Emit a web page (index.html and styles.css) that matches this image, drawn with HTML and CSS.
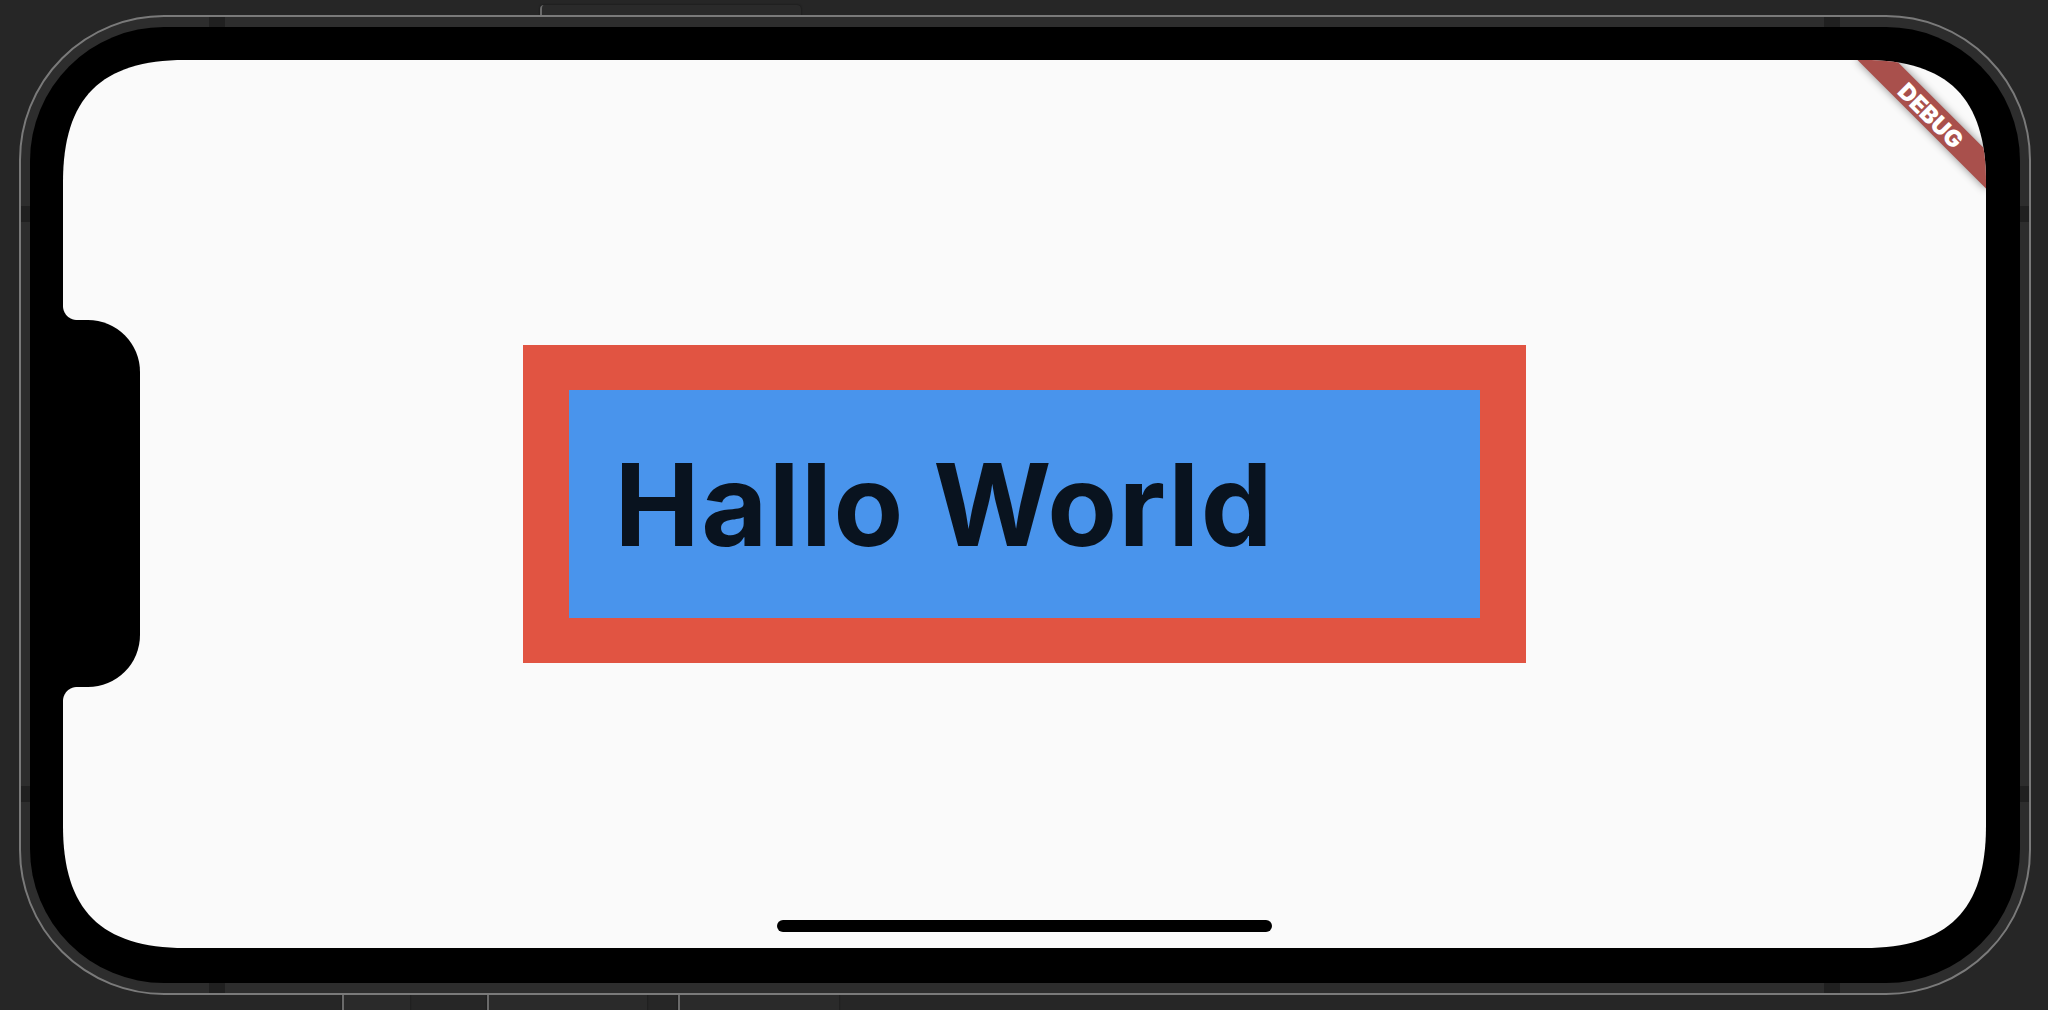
FILE: index.html
```html
<!DOCTYPE html>
<html lang="de">
<head>
<meta charset="utf-8">
<title>Hallo World</title>
<link rel="stylesheet" href="styles.css">
</head>
<body>
<div class="stage">
  <div class="side-btn btn-top"></div>
  <div class="side-btn btn-b1"></div>
  <div class="side-btn btn-b2"></div>
  <div class="side-btn btn-b3"></div>
  <div class="device">
    <span class="ant ant-t1"></span>
    <span class="ant ant-t2"></span>
    <span class="ant ant-b1"></span>
    <span class="ant ant-b2"></span>
    <span class="ant ant-l1"></span>
    <span class="ant ant-l2"></span>
    <span class="ant ant-r1"></span>
    <span class="ant ant-r2"></span>
    <div class="bezel">
      <div class="screen">
        <div class="outer-box">
          <div class="inner-box">
            <span class="label">Hallo World</span>
          </div>
        </div>
        <div class="notch"></div>
        <div class="home-indicator"></div>
        <div class="banner-anchor"><div class="banner">DEBUG</div></div>
      </div>
    </div>
  </div>
</div>
</body>
</html>
```

FILE: styles.css
```css
html, body {
  margin: 0;
  padding: 0;
}
body {
  width: 2048px;
  height: 1010px;
  overflow: hidden;
  background: #262626;
  font-family: "Inter", "Roboto", "Liberation Sans", sans-serif;
}
.stage {
  position: relative;
  width: 2048px;
  height: 1010px;
  box-sizing: border-box;
  padding: 15px 0 0 19px;
}

/* hardware buttons peeking out around the frame */
.side-btn {
  position: absolute;
  background: #2a2a2a;
  border-left: 2px solid #6a6a6a;
  border-radius: 4px;
  box-shadow: 0 0 2px rgba(0,0,0,0.6);
}
.btn-top { left: 540px; top: 5px; width: 259px; height: 16px; }
.btn-b1 { left: 342px; top: 990px; width: 66px; height: 30px; }
.btn-b2 { left: 487px; top: 990px; width: 158px; height: 30px; }
.btn-b3 { left: 678px; top: 990px; width: 159px; height: 30px; }

.device {
  position: relative;
  z-index: 1;
  width: 2012px;
  height: 980px;
  box-sizing: border-box;
  border: 2px solid #7a7a7a;
  border-radius: 145px;
  background: #2d2d2d;
  padding: 10px 9px;
}
.ant {
  position: absolute;
  background: #202020;
}
.ant-t1 { left: 188px; top: 0; width: 16px; height: 10px; }
.ant-t2 { left: 1803px; top: 0; width: 16px; height: 10px; }
.ant-b1 { left: 188px; top: 966px; width: 16px; height: 10px; }
.ant-b2 { left: 1803px; top: 966px; width: 16px; height: 10px; }
.ant-l1 { left: 0; top: 189px; width: 9px; height: 16px; }
.ant-l2 { left: 0; top: 769px; width: 9px; height: 16px; }
.ant-r1 { left: 1999px; top: 189px; width: 9px; height: 16px; }
.ant-r2 { left: 1999px; top: 769px; width: 9px; height: 16px; }

.bezel {
  height: 100%;
  box-sizing: border-box;
  background: #000;
  border-radius: 134px;
  padding: 33px 34px 35px 33px;
}
.screen {
  position: relative;
  width: 1923px;
  height: 888px;
  background: #fafafa;
  overflow: hidden;
  clip-path: path("M122,0 H1801 C1885,0 1923,38 1923,122 V766 C1923,850 1885,888 1801,888 H122 C38,888 0,850 0,766 V122 C0,38 38,0 122,0 Z");
  display: flex;
  align-items: center;
  justify-content: center;
}

.outer-box {
  background: #e15442;
  padding: 45.55px;
}
.inner-box {
  width: 911px;
  height: 227.75px;
  box-sizing: border-box;
  padding: 45.55px;
  background: #4994ec;
}
.label {
  display: block;
  font-size: 113.9px;
  font-weight: 700;
  line-height: 1.21;
  letter-spacing: 1.5px;
  color: rgba(0, 0, 0, 0.87);
  white-space: nowrap;
}

/* sensor housing cut-out on the left edge */
.notch {
  position: absolute;
  left: 0;
  top: 260px;
  width: 77px;
  height: 367px;
  background: #000;
  border-radius: 0 52px 52px 0;
}
.notch::before,
.notch::after {
  content: "";
  position: absolute;
  left: 0;
  width: 14px;
  height: 14px;
}
.notch::before {
  top: -14px;
  background: radial-gradient(circle at 100% 0, transparent 13.5px, #000 14.5px);
}
.notch::after {
  top: 100%;
  background: radial-gradient(circle at 100% 100%, transparent 13.5px, #000 14.5px);
}

.home-indicator {
  position: absolute;
  left: 50%;
  bottom: 16px;
  width: 495px;
  height: 12px;
  margin-left: -247.5px;
  border-radius: 6px;
  background: #000;
}

.banner-anchor {
  position: absolute;
  top: 0;
  right: 0;
  width: 0;
  height: 0;
}
.banner {
  position: absolute;
  left: -91.1px;
  top: 63.77px;
  width: 182.2px;
  height: 27.33px;
  transform-origin: 91.1px -63.77px;
  transform: rotate(45deg);
  background: #a9504c;
  box-shadow: 0 0 8px rgba(0, 0, 0, 0.45);
  color: #fff;
  font-size: 23.2px;
  font-weight: 900;
  line-height: 23.2px;
  display: flex;
  align-items: flex-end;
  justify-content: center;
}
```
